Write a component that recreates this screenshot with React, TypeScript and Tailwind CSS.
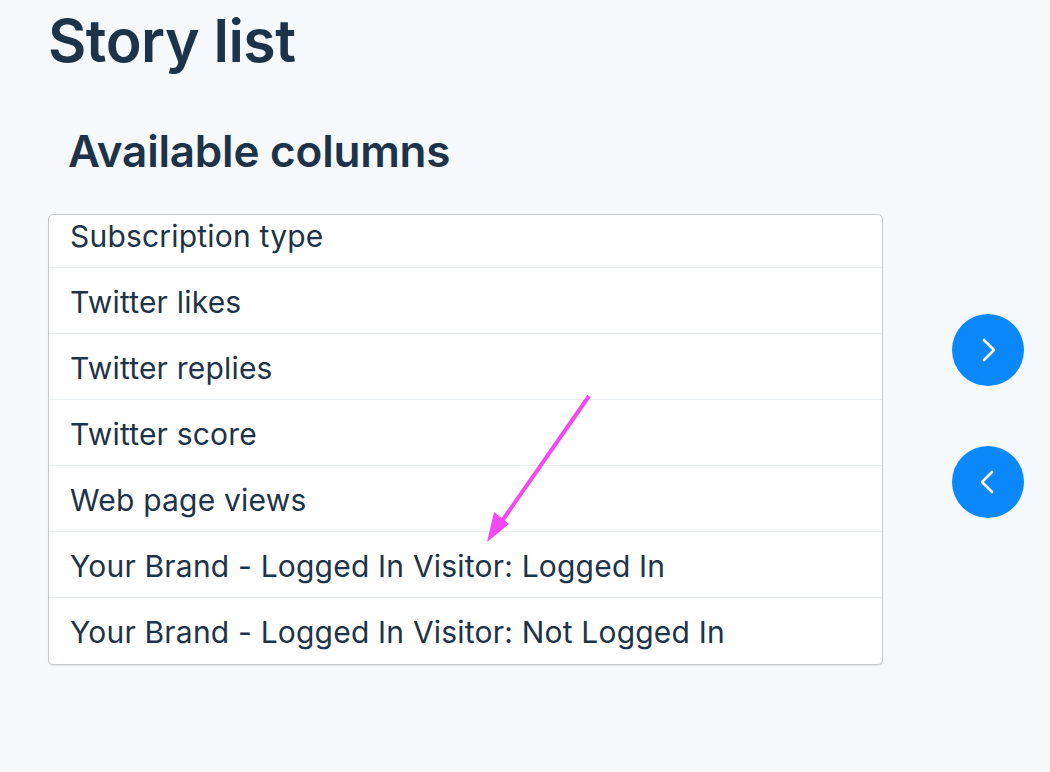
import React from 'react'

const rows = [
  'Subscription type',
  'Twitter likes',
  'Twitter replies',
  'Twitter score',
  'Web page views',
  'Your Brand - Logged In Visitor: Logged In',
  'Your Brand - Logged In Visitor: Not Logged In',
]

function Chevron({ dir }: { dir: 'left' | 'right' }) {
  return (
    <svg width="20" height="28" viewBox="0 0 20 28" fill="none">
      <path
        d={dir === 'right' ? 'M5 4 L15 14 L5 24' : 'M15 4 L5 14 L15 24'}
        stroke="white"
        strokeWidth="2.6"
        strokeLinecap="round"
        strokeLinejoin="round"
      />
    </svg>
  )
}

export default function App() {
  return (
    <div
      className="relative h-[772px] w-[1050px] overflow-hidden bg-[#f5f9fc] text-[#1d3349]"
      style={{ fontFamily: 'Inter, "Noto Sans", sans-serif' }}
    >
      <div className="pl-[48px] pt-[5px]">
        <h1 className="text-[59px] font-semibold leading-[72px] tracking-[-0.5px]">Story list</h1>
        <h2 className="mt-[48px] pl-[20px] text-[44px] font-semibold leading-[52px] tracking-[-0.2px]">
          Available columns
        </h2>
        <div className="mt-[37px] flex items-start">
          <div className="h-[451px] w-[835px] overflow-hidden rounded-[5px] border border-[#c5cacf] bg-white shadow-[0_1px_1px_rgba(0,0,0,0.08)]">
            <div className="-mt-[13px]">
              {rows.map((r, i) => (
                <div
                  key={r}
                  className={`flex h-[66px] items-center pl-[21px] pt-[3px] text-[30px] tracking-[0.2px] ${i < rows.length - 1 ? 'border-b border-[#eaeff3]' : ''}`}
                >
                  {r}
                </div>
              ))}
            </div>
          </div>
          <div className="ml-[69px] mt-[100px] flex flex-col gap-[60px]">
            <button className="flex h-[72px] w-[72px] items-center justify-center rounded-full bg-[#0a88fa] pl-[2px]">
              <Chevron dir="right" />
            </button>
            <button className="flex h-[72px] w-[72px] items-center justify-center rounded-full bg-[#0a88fa] pr-[2px]">
              <Chevron dir="left" />
            </button>
          </div>
        </div>
      </div>
      <svg className="absolute left-0 top-0" width="1050" height="772">
        <line x1="589" y1="396" x2="502" y2="521" stroke="#f548f2" strokeWidth="4" />
        <polygon points="487,542 494,512 509,524" fill="#f548f2" />
      </svg>
    </div>
  )
}
